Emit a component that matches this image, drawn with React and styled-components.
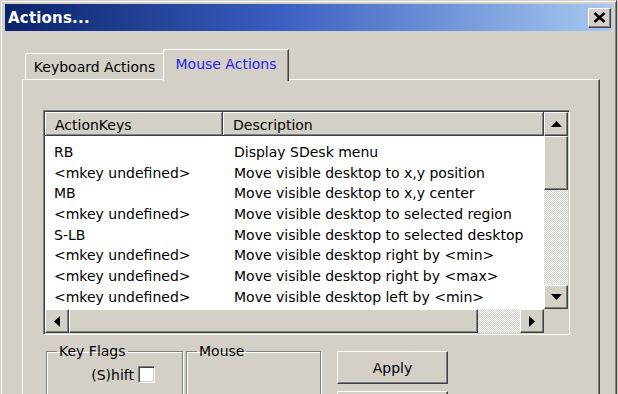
import styled, { createGlobalStyle } from "styled-components";

const GlobalStyle = createGlobalStyle`
  html, body {
    margin: 0;
    padding: 0;
    background: #d4d0c8;
    overflow: hidden;
  }
  * {
    box-sizing: border-box;
  }
`;

const FONT = `"DejaVu Sans", "Liberation Sans", sans-serif`;

const raised = `
  border: 1px solid;
  border-color: #fff #404040 #404040 #fff;
  box-shadow: inset -1px -1px #808080, inset 1px 1px #d4d0c8;
`;

const sunken = `
  border: 1px solid;
  border-color: #808080 #fff #fff #808080;
  box-shadow: inset 1px 1px #404040, inset -1px -1px #d4d0c8;
`;

const ROWS = [
  ["RB", "Display SDesk menu"],
  ["<mkey undefined>", "Move visible desktop to x,y position"],
  ["MB", "Move visible desktop to x,y center"],
  ["<mkey undefined>", "Move visible desktop to selected region"],
  ["S-LB", "Move visible desktop to selected desktop"],
  ["<mkey undefined>", "Move visible desktop right by <min>"],
  ["<mkey undefined>", "Move visible desktop right by <max>"],
  ["<mkey undefined>", "Move visible desktop left by <min>"],
];

const ARROWS = {
  up: "0,6 5.5,0 11,6",
  down: "0,0 11,0 5.5,6",
  left: "6,0 6,11 0,5.5",
  right: "0,0 0,11 6,5.5",
};

const Arrow = ({ dir }) => {
  const vertical = dir === "up" || dir === "down";
  return (
    <svg width={vertical ? 11 : 6} height={vertical ? 6 : 11}>
      <polygon points={ARROWS[dir]} fill="#000" />
    </svg>
  );
};

export default function App() {
  return (
    <>
      <GlobalStyle />
      <Window>
        <TitleBar>
          <Title>Actions...</Title>
          <CloseButton>
            <svg width="13" height="11" viewBox="0 0 13 11">
              <path d="M1.5 1 L11.5 10 M11.5 1 L1.5 10" stroke="#000" strokeWidth="2.6" />
            </svg>
          </CloseButton>
        </TitleBar>
        <Body>
          <TabStrip>
            <Tab>Keyboard Actions</Tab>
            <Tab $active>Mouse Actions</Tab>
          </TabStrip>
          <Panel>
            <ListView>
              <Table>
                <HeaderRow>
                  <HeaderCell>ActionKeys</HeaderCell>
                  <HeaderCell>Description</HeaderCell>
                </HeaderRow>
                <Rows>
                  {ROWS.map(([key, desc], i) => (
                    <Row key={i}>
                      <KeyCell>{key}</KeyCell>
                      <DescCell>{desc}</DescCell>
                    </Row>
                  ))}
                </Rows>
              </Table>
              <VScroll>
                <ScrollButton>
                  <Arrow dir="up" />
                </ScrollButton>
                <Thumb $size={54} />
                <Track />
                <ScrollButton>
                  <Arrow dir="down" />
                </ScrollButton>
              </VScroll>
              <HScroll>
                <ScrollButton>
                  <Arrow dir="left" />
                </ScrollButton>
                <Thumb $size={409} />
                <Track />
                <ScrollButton>
                  <Arrow dir="right" />
                </ScrollButton>
              </HScroll>
              <Corner />
            </ListView>
            <BottomRow>
              <Group $width={137}>
                <Legend>Key Flags</Legend>
                <CheckRow>
                  <span>(S)hift</span>
                  <CheckBox />
                </CheckRow>
              </Group>
              <Group $width={135}>
                <Legend>Mouse</Legend>
              </Group>
              <Buttons>
                <PushButton>Apply</PushButton>
                <PushButton />
              </Buttons>
            </BottomRow>
          </Panel>
        </Body>
      </Window>
    </>
  );
}

const Window = styled.div`
  width: 617px;
  height: 420px;
  padding: 3px 4px 0 4px;
  border: 1px solid;
  border-color: #d4d0c8 #404040 #404040 #d4d0c8;
  box-shadow: inset 1px 1px #fff, inset -1px -1px #808080;
  background: #d4d0c8;
  font-family: ${FONT};
  font-size: 14px;
  color: #000;
`;

const TitleBar = styled.div`
  display: flex;
  align-items: center;
  justify-content: space-between;
  height: 27px;
  padding: 0 1px 0 3px;
  background: linear-gradient(to right, #0a246a, #3a5ec0 45%, #a6caf0);
`;

const Title = styled.div`
  color: #fff;
  font-weight: bold;
  font-size: 15px;
  letter-spacing: 0.2px;
`;

const CloseButton = styled.div`
  display: flex;
  align-items: center;
  justify-content: center;
  width: 23px;
  height: 20px;
  background: #d4d0c8;
  ${raised}
`;

const Body = styled.div`
  padding: 18px 0 0 17px;
`;

const TabStrip = styled.div`
  display: flex;
  align-items: flex-end;
  height: 30px;
  padding-left: 3px;
  position: relative;
  z-index: 1;
`;

const Tab = styled.div`
  display: flex;
  align-items: center;
  justify-content: center;
  width: ${(p) => (p.$active ? "126px" : "138px")};
  height: ${(p) => (p.$active ? "32px" : "26px")};
  margin-bottom: ${(p) => (p.$active ? "-2px" : "0")};
  padding-bottom: ${(p) => (p.$active ? "3px" : "0")};
  color: ${(p) => (p.$active ? "#2222dd" : "#000")};
  background: #d4d0c8;
  border-top: 1px solid #fff;
  border-left: 1px solid #fff;
  border-right: ${(p) => (p.$active ? "1px solid #404040" : "none")};
  border-top-left-radius: 2px;
  box-shadow: ${(p) => (p.$active ? "inset -1px 0 #808080" : "none")};
`;

const Panel = styled.div`
  width: 578px;
  height: 330px;
  padding: 30px 0 0 20px;
  border-top: 1px solid #fff;
  border-left: 1px solid #fff;
  border-right: 1px solid #404040;
  box-shadow: inset -1px 0 #808080;
`;

const ListView = styled.div`
  display: grid;
  grid-template-columns: 499px 24px;
  grid-template-rows: 197px 24px;
  width: 527px;
  height: 225px;
  background: #fff;
  ${sunken}
  padding: 1px;
`;

const Table = styled.div`
  overflow: hidden;
  background: #fff;
`;

const HeaderRow = styled.div`
  display: grid;
  grid-template-columns: 178px 1fr;
  height: 24px;
`;

const HeaderCell = styled.div`
  display: flex;
  align-items: center;
  padding: 2px 0 0 10px;
  background: #d4d0c8;
  border-right: 1px solid #404040;
  border-bottom: 1px solid #404040;
  box-shadow: inset 1px 1px #fff, inset -1px -1px #808080;
`;

const Rows = styled.div`
  padding-top: 6px;
`;

const Row = styled.div`
  display: grid;
  grid-template-columns: 178px 1fr;
  height: 20.7px;
  line-height: 20.7px;
  white-space: nowrap;
`;

const KeyCell = styled.div`
  padding-left: 9px;
`;

const DescCell = styled.div`
  padding-left: 11px;
`;

const VScroll = styled.div`
  display: flex;
  flex-direction: column;
`;

const HScroll = styled.div`
  display: flex;
`;

const ScrollButton = styled.div`
  display: flex;
  align-items: center;
  justify-content: center;
  flex: 0 0 24px;
  width: 24px;
  height: 24px;
  background: #d4d0c8;
  ${raised}
`;

const Thumb = styled.div`
  flex: 0 0 ${(p) => p.$size}px;
  background: #d4d0c8;
  ${raised}
`;

const Track = styled.div`
  flex: 1;
  background-color: #d4d0c8;
  background-image: conic-gradient(#fff 25%, #d4d0c8 0 50%, #fff 0 75%, #d4d0c8 0);
  background-size: 2px 2px;
`;

const Corner = styled.div`
  background: #d4d0c8;
`;

const BottomRow = styled.div`
  display: flex;
  align-items: flex-start;
  margin-top: 8px;
  padding-left: 3px;
`;

const Group = styled.fieldset`
  width: ${(p) => p.$width}px;
  height: 80px;
  margin: 0 3px 0 0;
  padding: 4px 0 0 0;
  border: 1px solid #808080;
  box-shadow: inset 1px 1px #fff, 1px 1px #fff;
`;

const Legend = styled.legend`
  margin-left: 10px;
  padding: 0 2px;
  line-height: 17px;
`;

const CheckRow = styled.label`
  display: flex;
  align-items: center;
  justify-content: flex-end;
  gap: 4px;
  padding-right: 27px;
  margin-top: 2px;
`;

const CheckBox = styled.span`
  display: block;
  width: 17px;
  height: 17px;
  background: #fff;
  ${sunken}
`;

const Buttons = styled.div`
  display: flex;
  flex-direction: column;
  gap: 7px;
  margin-left: 13px;
  padding-top: 8px;
`;

const PushButton = styled.div`
  display: flex;
  align-items: center;
  justify-content: center;
  width: 111px;
  height: 33px;
  background: #d4d0c8;
  ${raised}
`;
